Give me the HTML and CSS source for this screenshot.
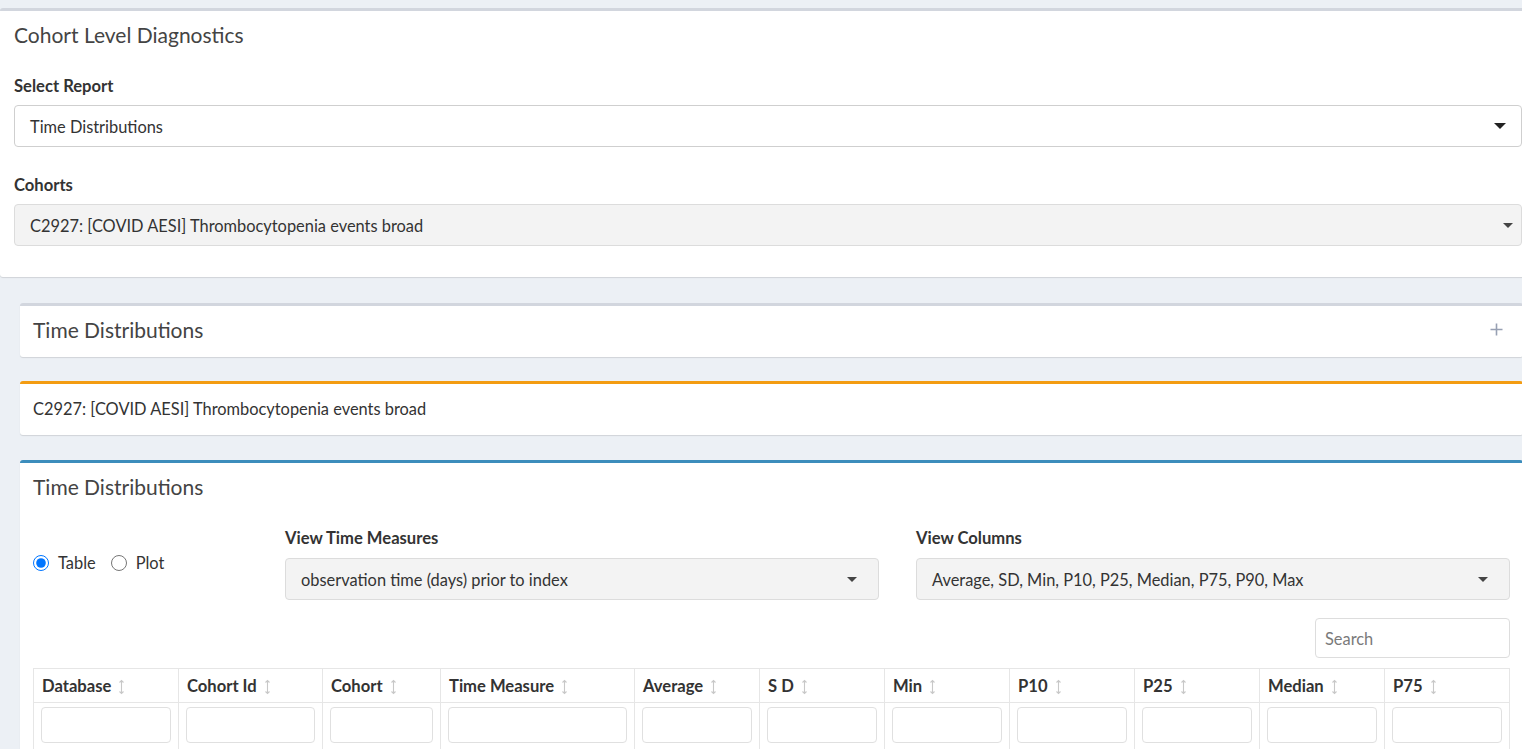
FILE: index.html
```html
<!DOCTYPE html>
<html lang="en">
<head>
<meta charset="utf-8">
<title>Cohort Level Diagnostics</title>
<link rel="stylesheet" href="styles.css">
</head>
<body>
<div class="page">
  <section class="card-top">
    <h3 class="top-title">Cohort Level Diagnostics</h3>
    <div class="field field-report">
      <div class="field-label">Select Report</div>
      <div class="select select-white"><span>Time Distributions</span><span class="caret caret-lg"></span></div>
    </div>
    <div class="field field-cohorts">
      <div class="field-label">Cohorts</div>
      <div class="select select-gray select-top"><span>C2927: [COVID AESI] Thrombocytopenia events broad</span><span class="caret"></span></div>
    </div>
  </section>

  <div class="content">
    <section class="box box-default">
      <h3 class="box-title">Time Distributions</h3>
      <svg class="plus" width="13" height="13" viewBox="0 0 13 13"><path d="M6.5 0.5V12.5M0.5 6.5H12.5" stroke="#97a0b3" stroke-width="1.6" fill="none"/></svg>
    </section>

    <section class="box box-warning">
      <div class="box-text">C2927: [COVID AESI] Thrombocytopenia events broad</div>
    </section>

    <section class="box box-primary">
      <h3 class="box-title">Time Distributions</h3>
      <div class="controls">
        <div class="radios">
          <label class="radio"><input type="radio" name="view" checked><span>Table</span></label>
          <label class="radio"><input type="radio" name="view"><span>Plot</span></label>
        </div>
        <div class="field">
          <div class="field-label">View Time Measures</div>
          <div class="select select-gray"><span>observation time (days) prior to index</span><span class="caret"></span></div>
        </div>
        <div class="field">
          <div class="field-label">View Columns</div>
          <div class="select select-gray"><span>Average, SD, Min, P10, P25, Median, P75, P90, Max</span><span class="caret"></span></div>
        </div>
      </div>
      <div class="search-row"><input class="search" type="text" placeholder="Search"></div>
      <table class="dt">
        <colgroup>
          <col class="c-db"><col class="c-id"><col class="c-cohort"><col class="c-tm">
          <col class="c-n"><col class="c-n"><col class="c-n"><col class="c-n"><col class="c-n"><col class="c-n"><col class="c-n">
        </colgroup>
        <thead>
          <tr>
            <th>Database<svg class="sort" width="7" height="16" viewBox="0 0 7 16"><path d="M3.5 1.5V14.5M1.5 3.5L3.5 1.5L5.5 3.5M1.5 12.5L3.5 14.5L5.5 12.5" stroke="#c8c8c8" stroke-width="1.1" fill="none"/></svg></th>
            <th>Cohort Id<svg class="sort" width="7" height="16" viewBox="0 0 7 16"><path d="M3.5 1.5V14.5M1.5 3.5L3.5 1.5L5.5 3.5M1.5 12.5L3.5 14.5L5.5 12.5" stroke="#c8c8c8" stroke-width="1.1" fill="none"/></svg></th>
            <th>Cohort<svg class="sort" width="7" height="16" viewBox="0 0 7 16"><path d="M3.5 1.5V14.5M1.5 3.5L3.5 1.5L5.5 3.5M1.5 12.5L3.5 14.5L5.5 12.5" stroke="#c8c8c8" stroke-width="1.1" fill="none"/></svg></th>
            <th>Time Measure<svg class="sort" width="7" height="16" viewBox="0 0 7 16"><path d="M3.5 1.5V14.5M1.5 3.5L3.5 1.5L5.5 3.5M1.5 12.5L3.5 14.5L5.5 12.5" stroke="#c8c8c8" stroke-width="1.1" fill="none"/></svg></th>
            <th>Average<svg class="sort" width="7" height="16" viewBox="0 0 7 16"><path d="M3.5 1.5V14.5M1.5 3.5L3.5 1.5L5.5 3.5M1.5 12.5L3.5 14.5L5.5 12.5" stroke="#c8c8c8" stroke-width="1.1" fill="none"/></svg></th>
            <th>S D<svg class="sort" width="7" height="16" viewBox="0 0 7 16"><path d="M3.5 1.5V14.5M1.5 3.5L3.5 1.5L5.5 3.5M1.5 12.5L3.5 14.5L5.5 12.5" stroke="#c8c8c8" stroke-width="1.1" fill="none"/></svg></th>
            <th>Min<svg class="sort" width="7" height="16" viewBox="0 0 7 16"><path d="M3.5 1.5V14.5M1.5 3.5L3.5 1.5L5.5 3.5M1.5 12.5L3.5 14.5L5.5 12.5" stroke="#c8c8c8" stroke-width="1.1" fill="none"/></svg></th>
            <th>P10<svg class="sort" width="7" height="16" viewBox="0 0 7 16"><path d="M3.5 1.5V14.5M1.5 3.5L3.5 1.5L5.5 3.5M1.5 12.5L3.5 14.5L5.5 12.5" stroke="#c8c8c8" stroke-width="1.1" fill="none"/></svg></th>
            <th>P25<svg class="sort" width="7" height="16" viewBox="0 0 7 16"><path d="M3.5 1.5V14.5M1.5 3.5L3.5 1.5L5.5 3.5M1.5 12.5L3.5 14.5L5.5 12.5" stroke="#c8c8c8" stroke-width="1.1" fill="none"/></svg></th>
            <th>Median<svg class="sort" width="7" height="16" viewBox="0 0 7 16"><path d="M3.5 1.5V14.5M1.5 3.5L3.5 1.5L5.5 3.5M1.5 12.5L3.5 14.5L5.5 12.5" stroke="#c8c8c8" stroke-width="1.1" fill="none"/></svg></th>
            <th>P75<svg class="sort" width="7" height="16" viewBox="0 0 7 16"><path d="M3.5 1.5V14.5M1.5 3.5L3.5 1.5L5.5 3.5M1.5 12.5L3.5 14.5L5.5 12.5" stroke="#c8c8c8" stroke-width="1.1" fill="none"/></svg></th>
          </tr>
        </thead>
        <tbody>
          <tr class="filters">
            <td><input type="text"></td><td><input type="text"></td><td><input type="text"></td><td><input type="text"></td>
            <td><input type="text"></td><td><input type="text"></td><td><input type="text"></td><td><input type="text"></td>
            <td><input type="text"></td><td><input type="text"></td><td><input type="text"></td>
          </tr>
        </tbody>
      </table>
    </section>
  </div>
</div>
</body>
</html>
```

FILE: styles.css
```css
html, body {
  margin: 0;
  padding: 0;
  overflow: hidden;
  background: #ecf0f5;
}
body {
  font-family: Lato, "Liberation Sans", sans-serif;
  font-size: 16.4px;
  color: #333;
}
.page {
  padding-top: 8px;
  width: 1540px;
}
.card-top {
  width: 1508px;
  background: #fff;
  border-top: 3px solid #d2d6de;
  border-radius: 3px;
  box-shadow: 0 1px 1px rgba(0,0,0,0.12);
  padding: 12px 14px 31px 14px;
}
.top-title {
  margin: 0;
  font-size: 21px;
  font-weight: 400;
  line-height: 24px;
  color: #444;
}
.field-label {
  font-weight: 700;
  font-size: 16.6px;
  line-height: 22px;
  margin-bottom: 8px;
  color: #333;
}
.field-report { margin-top: 28px; }
.field-cohorts { margin-top: 27px; }
.select {
  height: 42px;
  box-sizing: border-box;
  border-radius: 4px;
  display: flex;
  align-items: center;
  justify-content: space-between;
  padding: 0 15px 0 15px;
  color: #333;
}
.select-white {
  background: #fff;
  border: 1px solid #cfcfcf;
  padding-right: 15px;
}
.select-gray {
  background: #f3f3f3;
  border: 1px solid #dcdcdc;
  padding-right: 21px;
}
.select-top { padding-right: 8px; }
.caret {
  width: 0;
  height: 0;
  border-left: 5px solid transparent;
  border-right: 5px solid transparent;
  border-top: 5px solid #444;
}
.caret-lg {
  border-left-width: 6px;
  border-right-width: 6px;
  border-top-width: 6px;
  border-top-color: #222;
}
.content {
  padding-left: 20px;
  padding-top: 26px;
}
.box {
  width: 1503px;
  box-sizing: border-box;
  background: #fff;
  border-top: 3px solid #d2d6de;
  border-radius: 3px;
  box-shadow: 0 1px 1px rgba(0,0,0,0.12);
  margin-bottom: 24px;
  padding: 0 13px;
}
.box-default {
  display: flex;
  align-items: center;
  justify-content: space-between;
  height: 54px;
  padding-right: 20px;
}
.box-title {
  margin: 0;
  font-size: 21px;
  font-weight: 400;
  line-height: 24px;
  color: #444;
}
.box-default .box-title { margin-top: -3px; }
.plus { margin-top: -4px; }
.box-warning {
  border-top-color: #f39c12;
  height: 54px;
  display: flex;
  align-items: center;
  margin-bottom: 25px;
}
.box-text {
  line-height: 22px;
  color: #333;
  margin-top: -2px;
}
.box-primary {
  border-top-color: #3c8dbc;
  margin-bottom: 0;
  padding-top: 12px;
  height: 400px;
}
.controls {
  display: grid;
  grid-template-columns: 215px 594px 594px;
  column-gap: 37px;
  margin-top: 28px;
}
.controls .field-label { margin-bottom: 9px; }
.radios {
  display: flex;
  align-items: center;
  gap: 15px;
  padding-top: 25px;
  height: 22px;
}
.radio {
  display: flex;
  align-items: center;
  gap: 9px;
  line-height: 22px;
}
.radio input {
  margin: 0;
  width: 16px;
  height: 16px;
}
.search-row {
  display: flex;
  justify-content: flex-end;
  width: 1477px;
  margin-top: 18px;
}
.search {
  width: 195px;
  height: 40px;
  box-sizing: border-box;
  border: 1px solid #dddddd;
  border-radius: 4px;
  padding: 0 9px;
  font-family: Lato, "Liberation Sans", sans-serif;
  font-size: 16.4px;
  color: #333;
}
.search::placeholder { color: #7a7a7a; }
.dt {
  margin-top: 10px;
  width: 1476px;
  table-layout: fixed;
  border-collapse: collapse;
}
.c-db { width: 145px; }
.c-id { width: 144px; }
.c-cohort { width: 118px; }
.c-tm { width: 194px; }
.c-n { width: 125px; }
.dt th, .dt td {
  border: 1px solid #e6e6e6;
  padding: 0 8px;
  text-align: left;
}
.dt th {
  height: 33px;
  font-size: 16.6px;
  font-weight: 700;
  color: #333;
  white-space: nowrap;
}
.sort {
  vertical-align: -3px;
  margin-left: 7px;
}
.filters td {
  padding: 4px 7px 10px 7px;
}
.filters input {
  width: 100%;
  height: 36px;
  box-sizing: border-box;
  border: 1px solid #e0e0e0;
  border-radius: 4px;
  display: block;
}
```
